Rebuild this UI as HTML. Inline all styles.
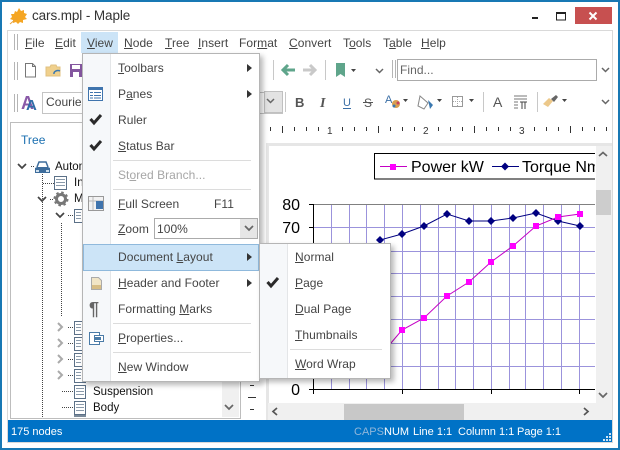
<!DOCTYPE html>
<html><head><meta charset="utf-8"><style>
html,body{margin:0;padding:0;background:#fff}
#w{position:relative;width:620px;height:450px;overflow:hidden;background:#fff;font-family:"Liberation Sans",sans-serif;font-size:12px;color:#444}
.a,.t{position:absolute}
.t{white-space:nowrap;line-height:16px;letter-spacing:.05px}
.s{font-size:11px;letter-spacing:0;color:#fff}
.n{font-size:11.5px;letter-spacing:0;color:#111}
svg{position:absolute;left:0;top:0}
</style></head><body><div id="w">
<div class="a" style="left:0;top:0;width:616px;height:446px;border:2px solid #1878b4"></div>
<div class="a" style="left:7px;top:30px;width:604px;height:411px;border:1px solid #d9d9d9"></div>
<div class="a" style="left:8px;top:420px;width:604px;height:22px;background:#0072c6"></div>
<div class="a" style="left:81px;top:32px;width:37px;height:21px;background:#cce4f7"></div>
<div class="a" style="left:575px;top:7px;width:37px;height:17px;background:#c75050"></div>
<div class="a" style="left:397px;top:59px;width:198px;height:20px;border:1px solid #ababab"></div>
<div class="a" style="left:42px;top:92px;width:239px;height:20px;border:1px solid #c4c4c4"></div>
<div class="a" style="left:264px;top:91px;width:17px;height:20px;background:#e3e3e3;border:1px solid #c0c0c0"></div>
<div class="a" style="left:10px;top:122px;width:229px;height:295px;border:1px solid #bdbdbd"></div>
<div class="a" style="left:222px;top:123px;width:17px;height:294px;background:#f0f0f0"></div>
<div class="a" style="left:266px;top:144px;width:3px;height:276px;background:#e6e6e6"></div>
<div class="a" style="left:266px;top:143px;width:346px;height:3px;background:#e6e6e6"></div>
<div class="a" style="left:596px;top:146px;width:16px;height:257px;background:#f0f0f0"></div>
<div class="a" style="left:596px;top:190px;width:15px;height:25px;background:#cdcdcd"></div>
<div class="a" style="left:268px;top:403px;width:344px;height:17px;background:#f0f0f0"></div>
<div class="a" style="left:344px;top:404px;width:120px;height:16px;background:#c8c8c8"></div>

<svg width="620" height="450" viewBox="0 0 620 450">
<!-- app leaf -->
<path d="M19 8l2 3 3-1 0 3 3 1-2 3 2 2-4 1 0 3-3-1-2 2-2-2-3 1 0-3-3-1 2-2-1-3 3 0 1-3 2 1z" fill="#f5a623"/><path d="M10 24l7-6" stroke="#e8a23c" fill="none"/>
<!-- window controls -->
<rect x="532" y="17" width="6" height="2" fill="#222"/>
<rect x="556.500" y="12.500" width="9" height="7.500" fill="none" stroke="#222"/><rect x="556" y="12" width="10" height="2" fill="#222"/>
<path d="M589.500 12.500l7 7M596.500 12.500l-7 7" stroke="#fff" stroke-width="2"/>
<!-- grips -->
<g fill="#b5b5b5"><rect x="14" y="34" width="1" height="16"/><rect x="17" y="34" width="1" height="16"/><rect x="14" y="62" width="1" height="18"/><rect x="17" y="62" width="1" height="18"/><rect x="14" y="94" width="1" height="18"/><rect x="17" y="94" width="1" height="18"/><rect x="392" y="60" width="1" height="18"/><rect x="395" y="60" width="1" height="18"/></g>
<!-- toolbar row 2 -->
<path d="M25.500 63.500h7l3 3v10.500h-10z" fill="#fff" stroke="#777"/><path d="M32.500 63.500v3h3" fill="none" stroke="#777"/>
<path d="M46 76v-9h4l1-2h5l1 2h3v9z" fill="#f0d08c" stroke="#e0c080"/><path d="M54 74a4 3 0 0 1 6-3" stroke="#3a78b0" stroke-width="1.500" fill="none"/>
<rect x="70" y="64" width="12" height="13" fill="#84569f"/><rect x="72" y="65" width="8" height="4" fill="#fff"/><rect x="73" y="72" width="6" height="5" fill="#fff"/>
<rect x="273" y="60" width="1" height="20" fill="#c8c8c8"/>
<path d="M295 70h-12M288 65l-5 5 5 5" stroke="#5fa58b" stroke-width="3" fill="none"/>
<path d="M303 70h12M310 65l5 5-5 5" stroke="#c9c9c9" stroke-width="3" fill="none"/>
<rect x="325" y="60" width="1" height="20" fill="#c8c8c8"/>
<path d="M336 63h9v14l-4.500-3-4.500 3z" fill="#5fa58b"/>
<path d="M351 69h5l-2.500 3z" fill="#444"/>
<path d="M376 69l3.500 3.500 3.500-3.500" stroke="#666" stroke-width="1.500" fill="none"/>
<path d="M602 68l3.500 3.500 3.500-3.500M602 100l3.500 3.500 3.500-3.500" stroke="#666" stroke-width="1.500" fill="none"/>
<!-- row 3 -->
<text x="21" y="109" font-family="Liberation Sans" font-weight="bold" font-size="18" fill="#8a5aa8">A</text>
<text x="26" y="110" font-family="Liberation Sans" font-weight="bold" font-size="15" fill="#2f6da8">A</text>
<path d="M267 99l3.500 3.500 3.500-3.500" stroke="#666" stroke-width="1.500" fill="none"/>
<rect x="285" y="92" width="1" height="20" fill="#c8c8c8"/>
<text x="295" y="107" font-family="Liberation Sans" font-weight="bold" font-size="13" fill="#555">B</text>
<text x="320" y="107" font-family="Liberation Serif" font-weight="bold" font-style="italic" font-size="14" fill="#555">I</text>
<text x="343" y="106" font-family="Liberation Sans" font-size="11" fill="#3a6ea5">U</text><rect x="343" y="108" width="8" height="1" fill="#3a6ea5"/>
<text x="364" y="107" font-family="Liberation Sans" font-size="12" fill="#555">S</text><rect x="363" y="102" width="10" height="1" fill="#555"/>
<text x="385" y="103" font-family="Liberation Sans" font-size="11" fill="#3a6ea5">A</text>
<circle cx="396" cy="104" r="4" fill="#d8a050"/><circle cx="394" cy="106" r="1.500" fill="#3a78b0"/><circle cx="398" cy="103" r="1.500" fill="#c84060"/>
<path d="M403 99h5l-2.500 3z" fill="#444"/>
<path d="M420 96l8 7-4 6-6-3z" fill="#fff" stroke="#888"/><path d="M428 100l5 5-3 4z" fill="#3a78b0"/><path d="M437 99h5l-2.500 3z" fill="#444"/>
<rect x="452.500" y="96.500" width="10" height="10" fill="#fff" stroke="#999"/><path d="M457.500 97v9M453 101.500h9" stroke="#aaa" stroke-dasharray="1 1"/><path d="M469 99h5l-2.500 3z" fill="#444"/>
<rect x="483" y="92" width="1" height="20" fill="#c8c8c8"/>
<text x="493" y="107" font-family="Liberation Sans" font-size="14" fill="#555">A</text>
<path d="M514 96h13M514 99h13M514 102h4M514 105h4M514 108h4" stroke="#777"/><path d="M520 102h7M522 102v7M525 102v7" stroke="#444"/>
<rect x="537" y="92" width="1" height="20" fill="#c8c8c8"/>
<path d="M543 104l6-6 4 3-5 6z" fill="#ecc88a"/><path d="M551 99l5-4 2 2-4 5z" fill="#666"/>
<path d="M562 99h5l-2.500 3z" fill="#444"/>
<!-- tree -->
<path d="M18 164l4 4 4-4M38 197l4 4 4-4M56 213l4 4 4-4" stroke="#444" stroke-width="1.700" fill="none"/>
<path d="M58 323l4 4-4 4M58 339l4 4-4 4M58 355l4 4-4 4M58 371l4 4-4 4" stroke="#aaa" stroke-width="2" fill="none"/>
<g stroke="#444" stroke-dasharray="1 1" fill="none"><path d="M42.500 174v243M61.500 223v94M43 183.500h11M62 391.500h11M62 407.500h11M31 166.500h4M50 199.500h4M68 215.500h5M68 327.500h5M68 343.500h5M68 359.500h5M68 375.500h5"/></g>
<path d="M37 167l2-5h7l2 5" fill="none" stroke="#3e6d9c" stroke-width="1.500"/><path d="M35 173v-5l2-1h11l2 1v5z" fill="#3e6d9c"/><rect x="36" y="170" width="3" height="2" fill="#cfe0ee"/><rect x="46" y="170" width="3" height="2" fill="#cfe0ee"/>
<circle cx="61" cy="199" r="4.500" fill="none" stroke="#777" stroke-width="3"/><circle cx="61" cy="199" r="6.500" fill="none" stroke="#777" stroke-width="2" stroke-dasharray="2.500 2.600"/>
<g fill="#fff" stroke="#5b7087"><rect x="54.500" y="176.500" width="12" height="13"/><path d="M56 179.500h9M56 182.500h9M56 185.500h9" stroke="#8a9aaa"/></g>
<g fill="#fff" stroke="#5b7087"><rect x="74.500" y="209.500" width="11" height="13"/><rect x="74.500" y="321.500" width="11" height="13"/><rect x="74.500" y="337.500" width="11" height="13"/><rect x="74.500" y="353.500" width="11" height="13"/><rect x="74.500" y="369.500" width="11" height="13"/><rect x="74.500" y="385.500" width="11" height="13"/><rect x="74.500" y="401.500" width="11" height="13"/><path d="M76 388.500h8M76 391.500h8M76 394.500h8M76 404.500h8M76 407.500h8M76 410.500h8M76 212.500h5M76 215.500h5M76 218.500h5M76 324.500h5M76 327.500h5M76 330.500h5M76 340.500h5M76 343.500h5M76 346.500h5M76 356.500h5M76 359.500h5M76 362.500h5M76 372.500h5M76 375.500h5M76 378.500h5" stroke="#8a9aaa"/></g>
<rect x="74" y="415" width="12" height="2" fill="#7a8a9a"/>
<path d="M225 405l4 4 4-4" stroke="#666" stroke-width="1.700" fill="none"/>
<path d="M250 385.500h4M248 397.500h8M250 409.500h4" stroke="#333"/>
<!-- ruler -->
<g stroke="#333"><path d="M270.500 127v4M282.500 126v7M294.500 127v4M306.500 127v4M318.500 127v4M342.500 127v4M354.500 127v4M366.500 127v4M378.500 126v7M390.500 127v4M402.500 127v4M414.500 127v4M438.500 127v4M450.500 127v4M462.500 127v4M474.500 126v7M486.500 127v4M498.500 127v4M510.500 127v4M534.500 127v4M546.500 127v4M558.500 127v4M570.500 126v7M582.500 127v4M594.500 127v4M606.500 127v4"/></g>
<text x="327" y="134" font-family="Liberation Sans" font-size="10" fill="#333">1</text>
<text x="423" y="134" font-family="Liberation Sans" font-size="10" fill="#333">2</text>
<text x="519" y="134" font-family="Liberation Sans" font-size="10" fill="#333">3</text>
<!-- chart -->
<g stroke="#9b93dc" stroke-width="1"><path d="M331.500 204v185M349.500 204v185M366.500 204v185M384.500 204v185M402.500 204v185M420.500 204v185M438.500 204v185M455.500 204v185M473.500 204v185M491.500 204v185M509.500 204v185M525.500 204v185M543.500 204v185M561.500 204v185M579.500 204v185"/><path d="M313 227.500h282M313 251.500h282M313 273.500h282M313 296.500h282M313 319.500h282M313 343.500h282M313 366.500h282"/></g>
<path d="M313 204.500h282" stroke="#808080"/>
<path d="M313.500 204v185M309 204.500h5M309 227.500h5M309 389.500h5" stroke="#000" fill="none"/>
<path d="M309 389.500h286M402.500 389v5M491.500 389v5M579.500 389v5M313.500 389v5" stroke="#000" fill="none"/>
<text x="300" y="210" text-anchor="end" font-family="Liberation Sans" font-size="16" fill="#000">80</text>
<text x="300" y="233" text-anchor="end" font-family="Liberation Sans" font-size="16" fill="#000">70</text>
<text x="300" y="395" text-anchor="end" font-family="Liberation Sans" font-size="16" fill="#000">0</text>
<polyline points="380,240 402,234 424,226 447,214 469,221 491,221 513,218 536,213 558,221 580,226" fill="none" stroke="#000080"/>
<g fill="#000080"><path d="M380 236l4 4-4 4-4-4zM402 230l4 4-4 4-4-4zM424 222l4 4-4 4-4-4zM447 210l4 4-4 4-4-4zM469 217l4 4-4 4-4-4zM491 217l4 4-4 4-4-4zM513 214l4 4-4 4-4-4zM536 209l4 4-4 4-4-4zM558 217l4 4-4 4-4-4zM580 222l4 4-4 4-4-4z"/></g>
<polyline points="380,354 391,343 402,330 424,318 447,296 469,282 491,262 513,246 536,226 558,217 580,214" fill="none" stroke="#c400c4"/>
<g fill="#ff00ff"><rect x="399" y="327" width="6" height="6"/><rect x="421" y="315" width="6" height="6"/><rect x="444" y="293" width="6" height="6"/><rect x="466" y="279" width="6" height="6"/><rect x="488" y="259" width="6" height="6"/><rect x="510" y="243" width="6" height="6"/><rect x="533" y="223" width="6" height="6"/><rect x="555" y="214" width="6" height="6"/><rect x="577" y="211" width="6" height="6"/></g>
<path d="M595 153.500h-220.500v25.500h220.500" fill="#fff" stroke="#000"/>
<path d="M380 166.500h27" stroke="#c400c4"/><rect x="390" y="164" width="6" height="6" fill="#ff00ff"/>
<path d="M492 166.500h27" stroke="#000080"/><path d="M505 162.500l4 4-4 4-4-4z" fill="#000080"/>
<clipPath id="lc"><rect x="500" y="150" width="95" height="30"/></clipPath>
<text x="411" y="172" font-family="Liberation Sans" font-size="16" fill="#000">Power kW</text>
<text x="522" y="172" font-family="Liberation Sans" font-size="16" fill="#000" clip-path="url(#lc)">Torque Nm</text>
<path d="M599 156l4-3.500 4 3.500" stroke="#666" stroke-width="1.700" fill="none"/>
<path d="M599 393l4 4 4-4" stroke="#666" stroke-width="1.700" fill="none"/>
<path d="M277 408l-4 3.500 4 3.500M584 408l4 3.500-4 3.500" stroke="#555" stroke-width="1.700" fill="none"/>
<g fill="#cfe3f3"><rect x="609" y="433" width="2" height="2"/><rect x="606" y="436" width="2" height="2"/><rect x="609" y="436" width="2" height="2"/><rect x="603" y="439" width="2" height="2"/><rect x="606" y="439" width="2" height="2"/><rect x="609" y="439" width="2" height="2"/></g>
</svg>

<div class="t" style="left:32px;top:8px;font-size:13.500px;letter-spacing:-.1px;color:#333">cars.mpl - Maple</div>
<div class="t" style="left:25px;top:35px"><u>F</u>ile</div>
<div class="t" style="left:55px;top:35px"><u>E</u>dit</div>
<div class="t" style="left:87px;top:35px"><u>V</u>iew</div>
<div class="t" style="left:124px;top:35px"><u>N</u>ode</div>
<div class="t" style="left:165px;top:35px"><u>T</u>ree</div>
<div class="t" style="left:198px;top:35px"><u>I</u>nsert</div>
<div class="t" style="left:239px;top:35px">For<u>m</u>at</div>
<div class="t" style="left:289px;top:35px"><u>C</u>onvert</div>
<div class="t" style="left:343px;top:35px">T<u>o</u>ols</div>
<div class="t" style="left:383px;top:35px">T<u>a</u>ble</div>
<div class="t" style="left:421px;top:35px"><u>H</u>elp</div>
<div class="t" style="left:400px;top:62px;color:#666">Find...</div>
<div class="t" style="left:46px;top:94px">Courier New</div>
<div class="t" style="left:21px;top:132px;color:#1a6fb0">Tree</div>
<div class="t n" style="left:55px;top:159px">Automobile</div>
<div class="t n" style="left:74px;top:175px">Intro</div>
<div class="t n" style="left:74px;top:191px">Motor</div>
<div class="t n" style="left:93px;top:384px">Suspension</div>
<div class="t n" style="left:93px;top:400px">Body</div>
<div class="t s" style="left:11px;top:424px">175 nodes</div>
<div class="t s" style="left:354px;top:424px;color:#8fb6da">CAPS</div>
<div class="t s" style="left:384px;top:424px">NUM</div>
<div class="t s" style="left:413px;top:424px">Line 1:1</div>
<div class="t s" style="left:458px;top:424px">Column 1:1</div>
<div class="t s" style="left:517px;top:424px">Page 1:1</div>

<!-- View menu -->
<div class="a" style="left:82px;top:53px;width:176px;height:327px;background:#fff;border:1px solid #b5b5b5;box-shadow:3px 3px 5px rgba(0,0,0,.28)"></div>
<div class="a" style="left:83px;top:54px;width:27px;height:327px;background:#f6f8fa;border-right:1px solid #e4e6e8"></div>
<div class="a" style="left:113px;top:160px;width:138px;height:1px;background:#dcdcdc"></div>
<div class="a" style="left:113px;top:189px;width:138px;height:1px;background:#dcdcdc"></div>
<div class="a" style="left:113px;top:323px;width:138px;height:1px;background:#dcdcdc"></div>
<div class="a" style="left:113px;top:352px;width:138px;height:1px;background:#dcdcdc"></div>
<div class="a" style="left:83px;top:244px;width:174px;height:25px;background:#cce4f7;border:1px solid #8fb9dc"></div>
<div class="a" style="left:154px;top:218px;width:102px;height:19px;background:#fff;border:1px solid #ababab"></div>
<div class="a" style="left:240px;top:219px;width:17px;height:19px;background:#e6e6e6"></div>
<div class="t" style="left:118px;top:60px"><u>T</u>oolbars</div>
<div class="t" style="left:118px;top:86px">P<u>a</u>nes</div>
<div class="t" style="left:118px;top:112px">Ruler</div>
<div class="t" style="left:118px;top:138px"><u>S</u>tatus Bar</div>
<div class="t" style="left:118px;top:167px;color:#a6a6a6">St<u>o</u>red Branch...</div>
<div class="t" style="left:118px;top:196px"><u>F</u>ull Screen</div>
<div class="t" style="left:214px;top:196px">F11</div>
<div class="t" style="left:118px;top:221px"><u>Z</u>oom</div>
<div class="t" style="left:157px;top:221px">100%</div>
<div class="t" style="left:118px;top:249px">Document <u>L</u>ayout</div>
<div class="t" style="left:118px;top:275px"><u>H</u>eader and Footer</div>
<div class="t" style="left:118px;top:301px">Formatting <u>M</u>arks</div>
<div class="t" style="left:118px;top:330px"><u>P</u>roperties...</div>
<div class="t" style="left:118px;top:359px"><u>N</u>ew Window</div>

<!-- Sub menu -->
<div class="a" style="left:259px;top:243px;width:130px;height:134px;background:#fff;border:1px solid #b5b5b5;box-shadow:3px 3px 5px rgba(0,0,0,.28)"></div>
<div class="a" style="left:260px;top:244px;width:27px;height:134px;background:#f6f8fa;border-right:1px solid #e4e6e8"></div>
<div class="a" style="left:290px;top:349px;width:92px;height:1px;background:#dcdcdc"></div>
<div class="t" style="left:295px;top:249px"><u>N</u>ormal</div>
<div class="t" style="left:295px;top:275px"><u>P</u>age</div>
<div class="t" style="left:295px;top:301px"><u>D</u>ual Page</div>
<div class="t" style="left:295px;top:327px"><u>T</u>humbnails</div>
<div class="t" style="left:295px;top:356px"><u>W</u>ord Wrap</div>

<svg width="620" height="450" viewBox="0 0 620 450">
<g fill="#333"><path d="M247 64l5 4-5 4zM247 90l5 4-5 4zM247 253l5 4-5 4zM247 279l5 4-5 4z"/></g>
<path d="M90.500 119l3.500 4 7-8M90.500 145l3.500 4 7-8M267.500 282l3.500 4 7-8" fill="none" stroke="#2a2a2a" stroke-width="3"/>
<rect x="88.500" y="87.500" width="14" height="13" fill="#fff" stroke="#3f74ad"/><rect x="89" y="88" width="13" height="2" fill="#3f74ad"/><path d="M90 92.500h3M90 95.500h3M90 98h3M94 92.500h7M94 95.500h7M94 98h7" stroke="#3f74ad"/>
<rect x="88.500" y="196.500" width="15" height="14" fill="#f2f2f2" stroke="#999"/><path d="M93 197v13M89 201h14" stroke="#bbb"/><rect x="96" y="201" width="7" height="8" fill="#3f74ad"/>
<path d="M245 226l4 4 4-4" stroke="#666" stroke-width="1.700" fill="none"/>
<path d="M91.500 277.500h7l3 3v9h-10z" fill="#f1e5c6" stroke="#aaa"/><rect x="92" y="285" width="9" height="4" fill="#d7bd85"/>
<text x="89" y="315" font-family="Liberation Sans" font-weight="bold" font-size="18" fill="#666">¶</text>
<rect x="89.500" y="332.500" width="10" height="12" fill="#fff" stroke="#4a7ba7"/><rect x="94.500" y="335.500" width="9" height="6" fill="#fff" stroke="#4a7ba7"/><rect x="94" y="337" width="7" height="3" fill="#4a7ba7"/>
</svg>
</div></body></html>
